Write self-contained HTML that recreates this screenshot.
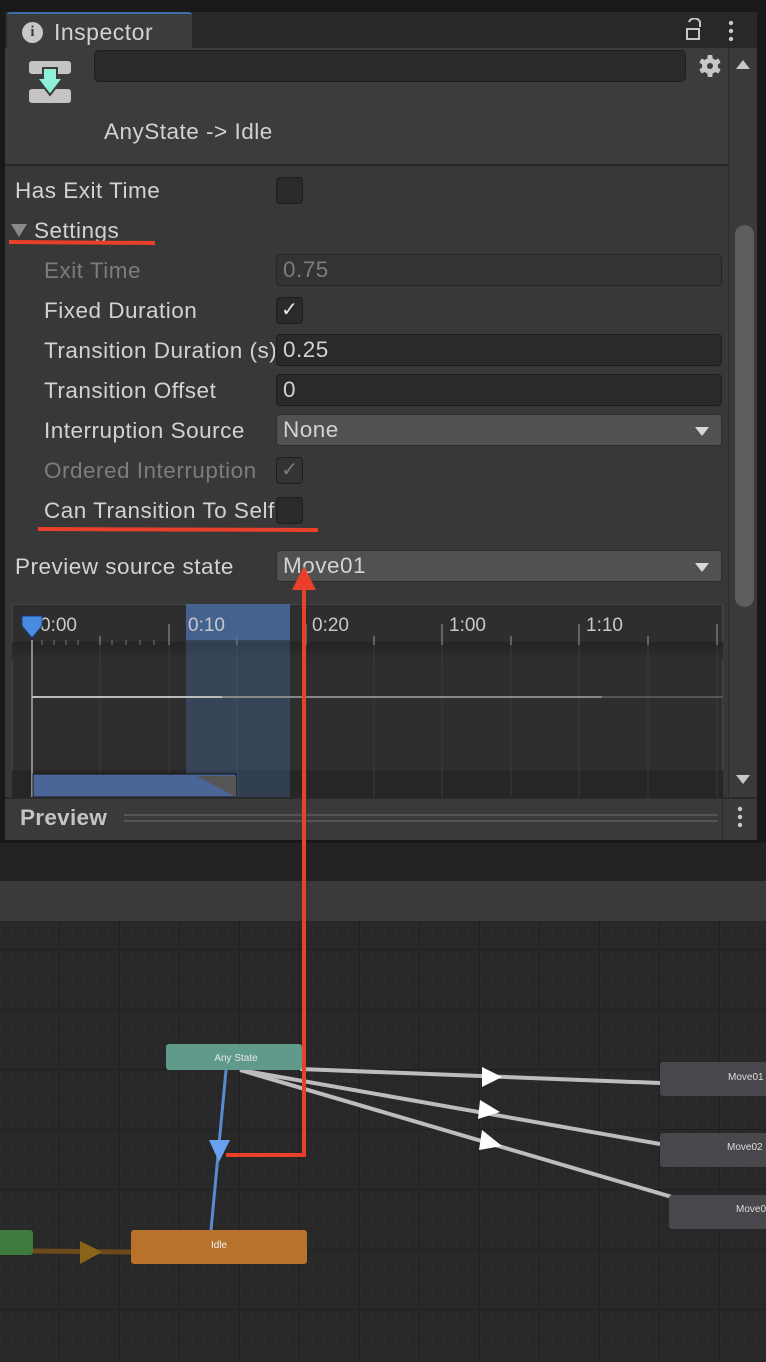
<!DOCTYPE html>
<html><head><meta charset="utf-8"><style>
*{margin:0;padding:0;box-sizing:border-box}
body{width:766px;height:1362px;background:#191919;position:relative;overflow:hidden;font-family:"Liberation Sans",sans-serif;color:#d2d2d2}
.a{position:absolute}
.lbl{position:absolute;font-size:22.5px;letter-spacing:0.5px;line-height:26px;white-space:nowrap}
.fld{position:absolute;left:276px;width:446px;height:32px;background:#2a2a2a;border:1px solid #1e1e1e;border-radius:4px;font-size:22.5px;letter-spacing:0.5px;line-height:30px;padding-left:6px}
.dd{background:#515151;border-color:#2e2e2e}
.dd:after{content:"";position:absolute;right:12px;top:12px;border-left:7px solid transparent;border-right:7px solid transparent;border-top:9px solid #d8d8d8}
.cb{position:absolute;left:276px;width:27px;height:27px;background:#2a2a2a;border:1px solid #1e1e1e;border-radius:4px}
</style></head><body>
<div class="a" style="left:5px;top:12px;width:752px;height:828px;background:#383838"></div>
<div class="a" style="left:5px;top:12px;width:752px;height:36px;background:#282828"></div>
<div class="a" style="left:7px;top:12px;width:185px;height:37px;background:#3c3c3c;border-top:2px solid #3a6ea5;border-radius:3px 3px 0 0"></div>
<div class="a" style="left:22px;top:22px;width:21px;height:21px;border-radius:50%;background:#c8c8c8;color:#3c3c3c;font:bold 15px/21px 'Liberation Serif',serif;text-align:center">i</div>
<div class="lbl" style="left:54px;top:19px;font-size:23px">Inspector</div>
<svg class="a" style="left:680px;top:18px" width="60" height="28"><path d="M9 4a6 6 0 0 1 11 0v5" stroke="#c8c8c8" stroke-width="2" fill="none"/><rect x="7" y="11" width="12" height="10" fill="none" stroke="#c8c8c8" stroke-width="2"/><circle cx="51" cy="5" r="2.2" fill="#c8c8c8"/><circle cx="51" cy="13" r="2.2" fill="#c8c8c8"/><circle cx="51" cy="21" r="2.2" fill="#c8c8c8"/></svg>
<div class="a" style="left:5px;top:48px;width:723px;height:118px;background:#3c3c3c;border-bottom:2px solid #242424"></div>
<svg class="a" style="left:28px;top:60px" width="44" height="44"><rect x="1" y="1" width="42" height="13" rx="3" fill="#c4c4c4"/><rect x="1" y="29" width="42" height="14" rx="3" fill="#c4c4c4"/><path d="M15 8h14v10h6L22 35 9 18h6z" fill="#8ff0d8" stroke="#3c3c3c" stroke-width="2"/></svg>
<div class="a" style="left:94px;top:50px;width:592px;height:32px;background:#2a2a2a;border:1px solid #1e1e1e;border-radius:5px"></div>
<svg class="a" style="left:698px;top:54px" width="24" height="24"><g fill="#c8c8c8"><rect x="9.5" y="1" width="5" height="22" rx="1"/><rect x="9.5" y="1" width="5" height="22" rx="1" transform="rotate(60 12 12)"/><rect x="9.5" y="1" width="5" height="22" rx="1" transform="rotate(120 12 12)"/><circle cx="12" cy="12" r="8"/></g><circle cx="12" cy="12" r="3" fill="#3c3c3c"/></svg>
<div class="lbl" style="left:104px;top:119px">AnyState -&gt; Idle</div>
<div class="a" style="left:728px;top:48px;width:29px;height:750px;background:#3a3a3a;border-left:1px solid #2e2e2e"></div>
<div class="a" style="left:736px;top:60px;border-left:7px solid transparent;border-right:7px solid transparent;border-bottom:9px solid #c8c8c8"></div>
<div class="a" style="left:735px;top:225px;width:19px;height:382px;background:#5e5e5e;border-radius:10px"></div>
<div class="a" style="left:736px;top:775px;border-left:7px solid transparent;border-right:7px solid transparent;border-top:9px solid #c8c8c8"></div>
<div class="lbl" style="left:15px;top:178px">Has Exit Time</div><div class="cb" style="top:177px"></div>
<div class="a" style="left:11px;top:224px;border-left:8px solid transparent;border-right:8px solid transparent;border-top:13px solid #8a8a8a"></div>
<div class="lbl" style="left:34px;top:218px">Settings</div>
<div class="lbl" style="left:44px;top:258px;color:#7c7c7c">Exit Time</div><div class="fld" style="top:254px;color:#7c7c7c;background:#333;border-color:#262626">0.75</div>
<div class="lbl" style="left:44px;top:298px">Fixed Duration</div><div class="cb" style="top:297px;color:#e8e8e8;font-size:20px;line-height:25px;text-align:center">✓</div>
<div class="lbl" style="left:44px;top:338px;width:231px;overflow:hidden">Transition Duration (s)</div><div class="fld" style="top:334px">0.25</div>
<div class="lbl" style="left:44px;top:378px">Transition Offset</div><div class="fld" style="top:374px">0</div>
<div class="lbl" style="left:44px;top:418px">Interruption Source</div><div class="fld dd" style="top:414px">None</div>
<div class="lbl" style="left:44px;top:458px;color:#7c7c7c;width:231px;overflow:hidden">Ordered Interruption</div><div class="cb" style="top:457px;color:#7c7c7c;font-size:20px;line-height:25px;text-align:center;background:#333">✓</div>
<div class="lbl" style="left:44px;top:498px;width:231px;overflow:hidden">Can Transition To Self</div><div class="cb" style="top:497px"></div>
<div class="lbl" style="left:15px;top:554px">Preview source state</div><div class="fld dd" style="top:550px">Move01</div>
<div class="a" style="left:12px;top:604px;width:711px;height:193px;background:#2e2e2e;border:1px solid #444"></div>
<div class="a" style="left:12px;top:642px;width:711px;height:18px;background:linear-gradient(#242424,#2e2e2e)"></div>
<div class="a" style="left:12px;top:770px;width:711px;height:27px;background:#262626"></div>
<svg class="a" style="left:12px;top:604px" width="711" height="193">
<g stroke="#3a3a3a" stroke-width="1"><line x1="88" y1="40" x2="88" y2="193"/><line x1="157" y1="40" x2="157" y2="193"/><line x1="225" y1="40" x2="225" y2="193"/><line x1="294" y1="40" x2="294" y2="193"/><line x1="362" y1="40" x2="362" y2="193"/><line x1="430" y1="40" x2="430" y2="193"/><line x1="499" y1="40" x2="499" y2="193"/><line x1="567" y1="40" x2="567" y2="193"/><line x1="636" y1="40" x2="636" y2="193"/><line x1="705" y1="40" x2="705" y2="193"/></g>
<g stroke="#9a9a9a"><line x1="88" y1="32" x2="88" y2="41"/><line x1="225" y1="32" x2="225" y2="41"/><line x1="362" y1="32" x2="362" y2="41"/><line x1="499" y1="32" x2="499" y2="41"/><line x1="636" y1="32" x2="636" y2="41"/><line x1="157" y1="20" x2="157" y2="41"/><line x1="294" y1="20" x2="294" y2="41"/><line x1="430" y1="20" x2="430" y2="41"/><line x1="567" y1="20" x2="567" y2="41"/><line x1="705" y1="20" x2="705" y2="41"/></g>
<g stroke="#777"><line x1="30" y1="36" x2="30" y2="41"/><line x1="42" y1="36" x2="42" y2="41"/><line x1="54" y1="36" x2="54" y2="41"/><line x1="66" y1="36" x2="66" y2="41"/><line x1="100" y1="36" x2="100" y2="41"/><line x1="114" y1="36" x2="114" y2="41"/><line x1="128" y1="36" x2="128" y2="41"/><line x1="142" y1="36" x2="142" y2="41"/></g>
<rect x="174" y="0" width="104" height="193" fill="#4a6fa8" opacity="0.35"/>
<rect x="174" y="0" width="104" height="36" fill="#4a6fa8" opacity="0.7"/>
<g fill="#c8c8c8" font-family="Liberation Sans" font-size="19"><text x="28" y="27">0:00</text><text x="176" y="27">0:10</text><text x="300" y="27">0:20</text><text x="437" y="27">1:00</text><text x="574" y="27">1:10</text></g>
<path d="M10 12h20v10l-10 12-10-12z" fill="#4a8ae0" stroke="#1b3a70"/>
<line x1="20" y1="36" x2="20" y2="193" stroke="#aaa" stroke-width="1.5"/>
<line x1="20" y1="93" x2="210" y2="93" stroke="#bbb" stroke-width="2"/><line x1="210" y1="93" x2="590" y2="93" stroke="#888" stroke-width="2"/><line x1="590" y1="93" x2="711" y2="93" stroke="#555" stroke-width="2"/>
<rect x="21" y="170" width="203" height="23" fill="#4a6596" stroke="#111"/>
<path d="M185 172h39v21z" fill="#555"/>
</svg>
<div class="a" style="left:5px;top:797px;width:752px;height:43px;background:#3a3a3a;border-top:2px solid #2a2a2a"></div>
<div class="lbl" style="left:20px;top:805px;font-weight:bold;color:#c4c4c4;letter-spacing:0.3px">Preview</div>
<div class="a" style="left:124px;top:814px;width:594px;height:8px;border-top:2px solid #555;border-bottom:2px solid #555"></div>
<div class="a" style="left:722px;top:799px;width:1px;height:40px;background:#2a2a2a"></div>
<svg class="a" style="left:734px;top:806px" width="12" height="24"><circle cx="6" cy="3" r="2.2" fill="#c8c8c8"/><circle cx="6" cy="11" r="2.2" fill="#c8c8c8"/><circle cx="6" cy="19" r="2.2" fill="#c8c8c8"/></svg>
<div class="a" style="left:0;top:843px;width:766px;height:38px;background:#232323"></div>
<div class="a" style="left:0;top:881px;width:766px;height:40px;background:#3a3a3a"></div>
<div class="a" style="left:0;top:921px;width:766px;height:441px;background-color:#282828;background-image:linear-gradient(#202020 1px,transparent 1px),linear-gradient(90deg,#202020 1px,transparent 1px),linear-gradient(#2c2c2c 1px,transparent 1px),linear-gradient(90deg,#2c2c2c 1px,transparent 1px);background-size:60px 60px,60px 60px,12px 12px,12px 12px;background-position:-1px 28px,-1px 0,0 4px,0 0"></div>
<svg class="a" style="left:0;top:0" width="766" height="1362">
<g stroke="#bdbdbd" stroke-width="4"><line x1="300" y1="1069" x2="660" y2="1083"/><line x1="240" y1="1070" x2="660" y2="1144"/><line x1="240" y1="1070" x2="672" y2="1197"/></g>
<g fill="#fff"><path d="M482 1067l20 10-20 10z"/><path d="M480 1100l20 12-22 7z"/><path d="M482 1130l20 16-23 4z"/></g>
<line x1="226" y1="1070" x2="211" y2="1230" stroke="#5a8ad0" stroke-width="3"/>
<path d="M209 1140h21l-11 22z" fill="#6aa0f0"/>
<line x1="33" y1="1251" x2="131" y2="1252" stroke="#6a4a18" stroke-width="5"/>
<path d="M80 1241l22 11-22 12z" fill="#8a6418"/>
<rect x="166" y="1044" width="136" height="26" rx="3" fill="#5f9a8a"/><text x="236" y="1061" fill="#e8e8e8" font-size="10" text-anchor="middle" font-family="Liberation Sans">Any State</text>
<rect x="131" y="1230" width="176" height="34" rx="3" fill="#b8722c"/><text x="219" y="1248" fill="#eee" font-size="10" text-anchor="middle" font-family="Liberation Sans">Idle</text>
<rect x="-5" y="1230" width="38" height="25" rx="3" fill="#3f7a3e"/>
<rect x="660" y="1062" width="115" height="34" rx="3" fill="#48484c"/><text x="728" y="1080" fill="#ddd" font-size="10" font-family="Liberation Sans">Move01</text>
<rect x="660" y="1133" width="115" height="34" rx="3" fill="#48484c"/><text x="727" y="1150" fill="#ddd" font-size="10" font-family="Liberation Sans">Move02</text>
<rect x="669" y="1195" width="105" height="34" rx="3" fill="#48484c"/><text x="736" y="1212" fill="#ddd" font-size="10" font-family="Liberation Sans">Move03</text>
<g stroke="#e8402a" stroke-width="4" fill="none"><line x1="9" y1="242" x2="155" y2="243"/><line x1="38" y1="529" x2="318" y2="530"/><path d="M226 1155H304V585"/></g>
<path d="M292 590l12-24 12 24z" fill="#e8402a"/>
</svg>
</body></html>
